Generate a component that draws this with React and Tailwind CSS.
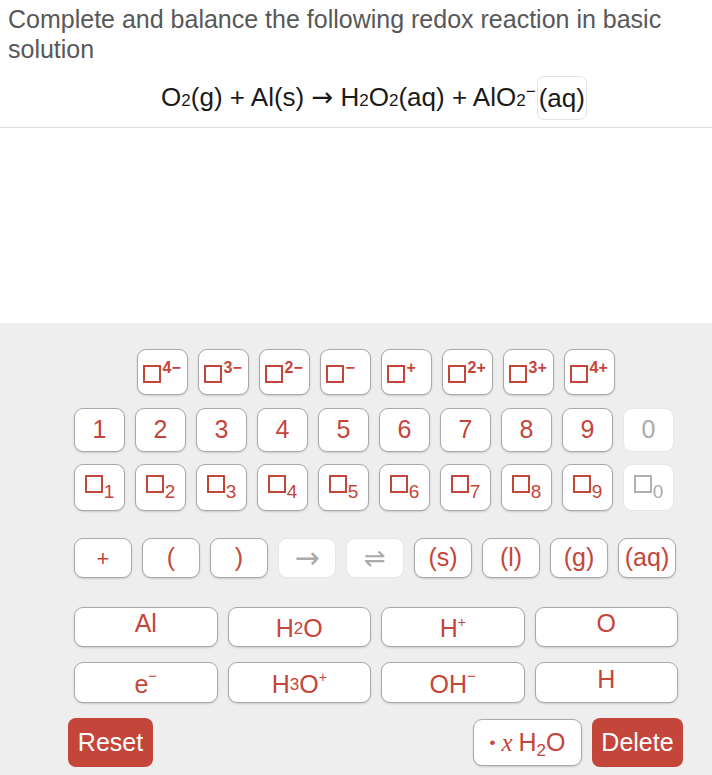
const RED = 'text-[#c4453a]'
const ARROW_FONT = { fontFamily: '"DejaVu Sans", sans-serif' }

function Sq({ size = 'w-[18px] h-[18px]', muted }) {
  return (
    <span
      className={`inline-block ${size} border-2 ${muted ? 'border-[#b0b0b0]' : 'border-[#c4453a]'}`}
    />
  )
}

function Key({ children, disabled, className = '' }) {
  return (
    <button
      className={`flex items-center justify-center rounded-[9px] bg-white ${
        disabled
          ? 'border border-[#e6e6e6] text-[#ababab]'
          : `border border-[#a9a9a9] shadow-[0_1px_2px_rgba(0,0,0,0.15)] ${RED}`
      } ${className}`}
    >
      {children}
    </button>
  )
}

const charges = ['4−', '3−', '2−', '−', '+', '2+', '3+', '4+']

export default function App() {
  return (
    <div
      className="flex h-[775px] w-[712px] flex-col bg-white"
      style={{ fontFamily: '"Liberation Sans", Arial, sans-serif' }}
    >
      <div className="px-2 pt-[4px] text-[25px] leading-[30px] text-[#585858]">
        Complete and balance the following redox reaction in basic
        <br />
        solution
      </div>
      <div className="flex h-[64px] items-center justify-center border-b border-[#dddddd] pl-[36px] pt-[4px] text-[26px] text-[#1a1a1a]">
        <span>
          O<span className="text-[17px]">2</span>(g) + Al(s){' '}
          <span className="text-[26px] leading-none" style={ARROW_FONT}>→</span> H<span className="text-[17px]">2</span>O
          <span className="text-[17px]">2</span>(aq) + AlO<span className="text-[17px]">2</span>
          <span className="relative top-[-9px] text-[17px]">−</span>
        </span>
        <span className="ml-[1px] rounded-[7px] border border-[#e4e4e4] px-[1px] py-[5px] leading-[32px]">(aq)</span>
      </div>
      <div className="flex-1" />
      <div className="flex h-[452px] flex-col bg-[#eeeeee] pt-[26px]">
        <div className="ml-[74px] flex w-[604px] flex-col">
          <div className="flex justify-center gap-[10px]">
            {charges.map((c) => (
              <Key key={c} className="h-[46px] w-[51px] gap-[2px] pt-[4px]">
                <Sq />
                <span className="-mt-[12px] w-[20px] text-left text-[16px] font-bold leading-none">{c}</span>
              </Key>
            ))}
          </div>
          <div className="mt-[13px] flex gap-[10px]">
            {['1', '2', '3', '4', '5', '6', '7', '8', '9', '0'].map((n) => (
              <Key key={n} disabled={n === '0'} className="h-[44px] w-[51px] text-[25px]">
                {n}
              </Key>
            ))}
          </div>
          <div className="mt-[12px] flex gap-[10px]">
            {['1', '2', '3', '4', '5', '6', '7', '8', '9', '0'].map((n) => (
              <Key key={n} disabled={n === '0'} className="h-[47px] w-[51px] items-start pt-[10px]">
                <Sq muted={n === '0'} />
                <span className="ml-[1px] mt-[7px] text-[19px] leading-none">{n}</span>
              </Key>
            ))}
          </div>
          <div className="mt-[27px] flex gap-[10px]">
            {['+', '(', ')', '→', '⇌', '(s)', '(l)', '(g)', '(aq)'].map((s) => (
              <Key
                key={s}
                disabled={s === '→' || s === '⇌'}
                className={`h-[40px] w-[58px] ${s === '+' ? 'text-[22px]' : s === '→' ? 'text-[30px]' : s === '⇌' ? 'text-[26px]' : 'text-[25px]'}`}
              >
                {s === '→' || s === '⇌' ? <span className="leading-none" style={ARROW_FONT}>{s}</span> : s}
              </Key>
            ))}
          </div>
          <div className="mt-[29px] grid grid-cols-4 gap-x-[10px] gap-y-[15px]">
            <Key className="h-[40px] pb-[6px] text-[25px]">Al</Key>
            <Key className="h-[40px] pt-[4px] text-[25px]">
              H<span className="text-[17px]">2</span>O
            </Key>
            <Key className="h-[40px] pt-[4px] text-[25px]">
              H<span className="relative top-[-7px] text-[14px]">+</span>
            </Key>
            <Key className="h-[40px] pb-[6px] text-[25px]">O</Key>
            <Key className="h-[41px] pt-[4px] text-[25px]">
              e<span className="relative top-[-8px] text-[15px]">−</span>
            </Key>
            <Key className="h-[41px] pt-[4px] text-[25px]">
              H<span className="text-[17px]">3</span>O<span className="relative top-[-7px] text-[14px]">+</span>
            </Key>
            <Key className="h-[41px] pt-[4px] text-[25px]">
              OH<span className="relative top-[-8px] text-[15px]">−</span>
            </Key>
            <Key className="h-[41px] pb-[6px] text-[25px]">H</Key>
          </div>
        </div>
        <div className="ml-[68px] mt-[15px] flex w-[615px] items-center">
          <button className="flex h-[49px] w-[85px] items-center justify-center rounded-[8px] bg-[#c4453a] text-[25px] text-white">
            Reset
          </button>
          <div className="flex-1" />
          <Key className="h-[47px] w-[109px] gap-[6px] text-[25px]">
            <span className="text-[17px]">•</span>
            <span className="italic" style={{ fontFamily: '"Liberation Serif", serif' }}>x</span>
            <span>
              H<span className="relative top-[5px] text-[17px]">2</span>O
            </span>
          </Key>
          <button className="ml-[10px] flex h-[49px] w-[91px] items-center justify-center rounded-[8px] bg-[#c4453a] text-[25px] text-white">
            Delete
          </button>
        </div>
      </div>
    </div>
  )
}
